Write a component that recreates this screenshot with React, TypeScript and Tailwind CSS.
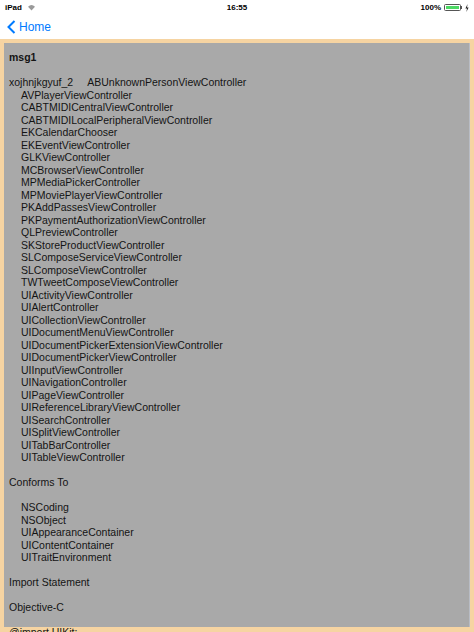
const controllers = [
  "AVPlayerViewController",
  "CABTMIDICentralViewController",
  "CABTMIDILocalPeripheralViewController",
  "EKCalendarChooser",
  "EKEventViewController",
  "GLKViewController",
  "MCBrowserViewController",
  "MPMediaPickerController",
  "MPMoviePlayerViewController",
  "PKAddPassesViewController",
  "PKPaymentAuthorizationViewController",
  "QLPreviewController",
  "SKStoreProductViewController",
  "SLComposeServiceViewController",
  "SLComposeViewController",
  "TWTweetComposeViewController",
  "UIActivityViewController",
  "UIAlertController",
  "UICollectionViewController",
  "UIDocumentMenuViewController",
  "UIDocumentPickerExtensionViewController",
  "UIDocumentPickerViewController",
  "UIInputViewController",
  "UINavigationController",
  "UIPageViewController",
  "UIReferenceLibraryViewController",
  "UISearchController",
  "UISplitViewController",
  "UITabBarController",
  "UITableViewController",
];

const protocols = [
  "NSCoding",
  "NSObject",
  "UIAppearanceContainer",
  "UIContentContainer",
  "UITraitEnvironment",
];

function Line({ children, indent }: { children?: React.ReactNode; indent?: boolean }) {
  return (
    <div className={`h-[12.5px] whitespace-nowrap leading-[12.5px] ${indent ? "pl-3" : ""}`}>
      {children}
    </div>
  );
}

function StatusBar() {
  return (
    <div className="relative flex h-[15px] items-center px-[5px] text-[8px] font-semibold text-black">
      <div className="flex items-center gap-[5px]">
        <span>iPad</span>
        <svg width="9" height="7" viewBox="0 0 10 8">
          <path d="M5 7.5 L1 3 A6 6 0 0 1 9 3 Z" fill="#9a9a9a" />
        </svg>
      </div>
      <span className="absolute left-1/2 -translate-x-1/2">16:55</span>
      <div className="ml-auto flex items-center gap-[3px]">
        <span>100%</span>
        <div className="flex items-center">
          <div className="h-[7px] w-[17px] rounded-[1.5px] border border-[#555] p-[1px]">
            <div className="h-full w-full bg-[#4cd964]" />
          </div>
          <div className="h-[3px] w-[1px] bg-[#555]" />
        </div>
        <svg width="4" height="8" viewBox="0 0 4 8">
          <path d="M2.6 0 L0.4 4.4 H2 L1.4 8 L3.6 3.6 H2 Z" fill="#222" />
        </svg>
      </div>
    </div>
  );
}

export default function App() {
  return (
    <div
      className="h-[632px] w-[474px] overflow-hidden bg-white"
      style={{ fontFamily: '"Liberation Sans", Arial, sans-serif' }}
    >
      <StatusBar />
      <div className="flex h-[24px] items-center gap-[3px] px-[7px] text-[#007aff]">
        <svg width="9" height="14" viewBox="0 0 9 14">
          <path d="M7.5 1 L1.5 7 L7.5 13" fill="none" stroke="#007aff" strokeWidth="2" />
        </svg>
        <span className="text-[12px] leading-none">Home</span>
      </div>
      <div className="h-full bg-[#f6d4a2] px-[4px] pt-[4px]">
        <div className="h-[584px] border-r border-[#b8bcc4] bg-[#a9a9a9] pl-[5px] pt-[8px] text-[10.5px] text-[#141414]">
          <Line>
            <span className="font-bold">msg1</span>
          </Line>
          <Line />
          <Line>
            xojhnjkgyuf_2<span className="ml-[14px]">ABUnknownPersonViewController</span>
          </Line>
          {controllers.map((c) => (
            <Line key={c} indent>
              {c}
            </Line>
          ))}
          <Line />
          <Line>Conforms To</Line>
          <Line />
          {protocols.map((p) => (
            <Line key={p} indent>
              {p}
            </Line>
          ))}
          <Line />
          <Line>Import Statement</Line>
          <Line />
          <Line>Objective-C</Line>
          <Line />
          <Line>@import UIKit;</Line>
        </div>
      </div>
    </div>
  );
}
